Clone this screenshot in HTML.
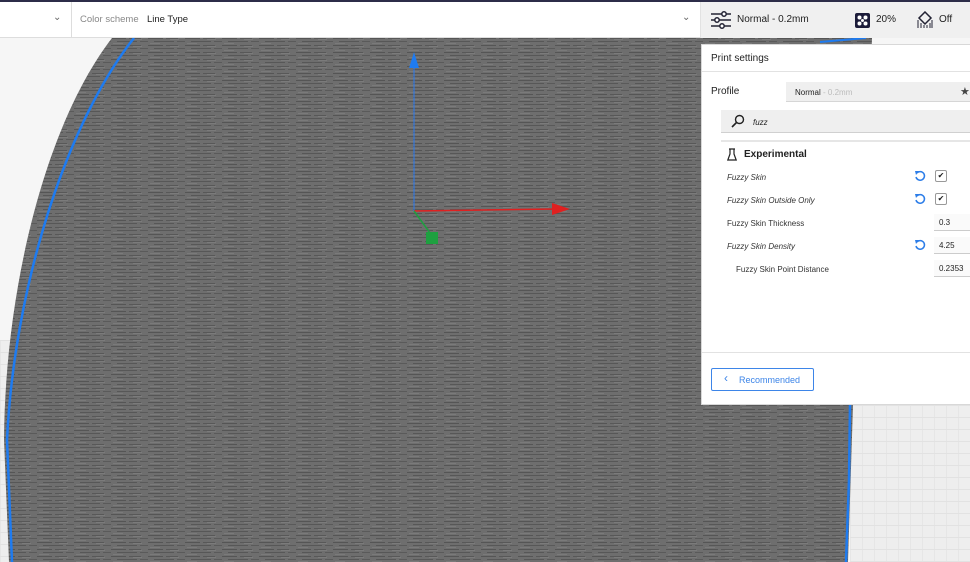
<!DOCTYPE html>
<html><head><meta charset="utf-8"><style>
*{margin:0;padding:0;box-sizing:border-box}
body{width:970px;height:562px;overflow:hidden;position:relative;background:#f6f6f6;font-family:"Liberation Sans",sans-serif;font-size:9px;color:#222}
.top{position:absolute;left:0;top:0;width:970px;height:38px;background:#fff;border-top:2px solid #2c2c48;border-bottom:1px solid #ddd}
.floor{position:absolute;background-color:#eeeeee;background-image:linear-gradient(#e2e2e2 1px,transparent 1px),linear-gradient(90deg,#e6e6e6 1px,transparent 1px);background-size:12px 12px}
.panel{position:absolute;left:701px;top:44px;width:269px;height:361px;background:#fff;border:1px solid #d8d8d8;border-right:none}
.t{position:absolute;white-space:nowrap}
.it{font-style:italic;font-size:8px;color:#333}
.lbl{font-size:8px;color:#333}
.cb{position:absolute;left:233px;width:12px;height:12px;border:1px solid #999;border-radius:2px;background:#fff;font-size:8px;line-height:10px;text-align:center}
.inp{position:absolute;left:232px;width:40px;height:17px;border-bottom:1px solid #ccc;background:#fafafa;font-size:8px;padding:4px 0 0 5px}
.rs{position:absolute;left:212px}
</style></head><body>
<div class="floor" style="left:0;top:340px;width:20px;height:222px"></div>
<div class="floor" style="left:850px;top:405px;width:120px;height:157px"></div>
<svg style="position:absolute;left:0;top:0" width="970" height="562">
<defs><pattern id="p" width="37" height="7" patternUnits="userSpaceOnUse">
<rect width="37" height="7" fill="#6e6e6e"/>
<rect y="3" width="15" height="1" fill="#555"/><rect x="18" y="3" width="12" height="1" fill="#585858"/>
<rect x="6" y="6" width="20" height="1" fill="#575757"/><rect x="29" y="6" width="8" height="1" fill="#5a5a5a"/>
<rect x="2" y="1" width="10" height="1" fill="#7a7a7a"/><rect x="22" y="4" width="9" height="1" fill="#7b7b7b"/>
</pattern></defs>
<path d="M112,38 C45,125 5,290 4,440 L9,562 L848,562 L853,405 C858,250 870,100 872,38 Z" fill="url(#p)"/>
<path d="M134,38 C65,125 14,290 7,440 L12,562" fill="none" stroke="#1e7bf0" stroke-width="2.5"/>
<path d="M850,405 L849,480 L846,562" fill="none" stroke="#1e7bf0" stroke-width="2.5"/>
<path d="M820,42 L866,38" stroke="#1e7bf0" stroke-width="2"/>
<line x1="414" y1="62" x2="414" y2="211" stroke="#2a7af0" stroke-width="1"/>
<polygon points="414,52 409,68 419,68" fill="#1e7bf0"/>
<line x1="414" y1="211" x2="555" y2="209" stroke="#e02020" stroke-width="1.5"/>
<polygon points="570,209 552,203 552,215" fill="#e02020"/>
<line x1="414" y1="211" x2="430" y2="233" stroke="#1ea040" stroke-width="1.5"/>
<rect x="426" y="232" width="12" height="12" fill="#1ea040"/>
</svg>
<div class="top">
 <div style="position:absolute;left:71px;top:0;width:1px;height:36px;background:#ddd"></div>
 <div class="t" style="left:53px;top:10px;color:#666;font-size:10px">&#8964;</div>
 <div class="t" style="left:80px;top:12px;color:#888;font-size:9.5px">Color scheme</div>
 <div class="t" style="left:147px;top:12px;font-size:9.5px">Line Type</div>
 <div class="t" style="left:682px;top:10px;color:#666;font-size:10px">&#8964;</div>
 <div style="position:absolute;left:700px;top:0;width:270px;height:36px;background:#f0f0f0;border-left:1px solid #e2e2e2"></div>
 <svg style="position:absolute;left:711px;top:9px" width="20" height="18"><g stroke="#223" stroke-width="1.5" fill="#fff"><line x1="0" y1="3" x2="20" y2="3"/><line x1="0" y1="9" x2="20" y2="9"/><line x1="0" y1="15" x2="20" y2="15"/><circle cx="13" cy="3" r="2.2"/><circle cx="6" cy="9" r="2.2"/><circle cx="11" cy="15" r="2.2"/></g></svg>
 <div class="t" style="left:737px;top:12px;font-size:10px">Normal - 0.2mm</div>
 <svg style="position:absolute;left:855px;top:11px" width="15" height="15"><rect width="15" height="15" rx="2" fill="#1c1c3a"/><g fill="#fff"><circle cx="4.5" cy="4.5" r="2"/><circle cx="10.5" cy="4.5" r="2"/><circle cx="4.5" cy="10.5" r="2"/><circle cx="10.5" cy="10.5" r="2"/><circle cx="7.5" cy="7.5" r="1.5"/></g></svg>
 <div class="t" style="left:876px;top:12px;font-size:10px">20%</div>
 <svg style="position:absolute;left:917px;top:9px" width="16" height="18"><path d="M8,1 L14,7 L8,13 L2,7 Z" fill="none" stroke="#223" stroke-width="1.5"/><path d="M1,9 L1,17 M4,12 L4,17 M7,14 L7,17 M10,14 L10,17 M13,12 L13,17 M15,9 L15,17" stroke="#223" stroke-width="1"/></svg>
 <div class="t" style="left:939px;top:12px;font-size:10px">Off</div>
</div>
<div class="panel">
 <div class="t" style="left:9px;top:8px;font-size:10px">Print settings</div>
 <div style="position:absolute;left:0;top:26px;width:269px;height:1px;background:#e2e2e2"></div>
 <div class="t" style="left:9px;top:41px;font-size:10px">Profile</div>
 <div style="position:absolute;left:84px;top:37px;width:185px;height:20px;background:#efefef;border-bottom:1px solid #d6d6d6"></div>
 <div class="t" style="left:93px;top:43px;font-size:8px">Normal <span style="color:#bbb">- 0.2mm</span></div>
 <div class="t" style="left:258px;top:40px;font-size:11px;color:#444">&#9733;</div>
 <div style="position:absolute;left:19px;top:65px;width:250px;height:23px;background:#efefef;border-bottom:1px solid #d0d0d0"></div>
 <svg style="position:absolute;left:29px;top:69px" width="14" height="14"><circle cx="8.5" cy="5.5" r="4" fill="none" stroke="#222" stroke-width="1.4"/><line x1="5.5" y1="8.5" x2="1" y2="13" stroke="#222" stroke-width="1.6"/></svg>
 <div class="t it" style="left:51px;top:73px;color:#222">fuzz</div>
 <div style="position:absolute;left:19px;top:95px;width:250px;height:2px;background:#e6e6e6"></div>
 <svg style="position:absolute;left:25px;top:103px" width="10" height="13"><path d="M2,1 L8,1 M3,1 L3,6 L0.8,12 L9.2,12 L7,6 L7,1" fill="none" stroke="#222" stroke-width="1.2"/></svg>
 <div class="t" style="left:42px;top:104px;font-size:10px;font-weight:bold">Experimental</div>
 <div class="t it" style="left:25px;top:128px">Fuzzy Skin</div>
 <div class="t it" style="left:25px;top:151px">Fuzzy Skin Outside Only</div>
 <div class="t lbl" style="left:25px;top:174px">Fuzzy Skin Thickness</div>
 <div class="t it" style="left:25px;top:197px">Fuzzy Skin Density</div>
 <div class="t lbl" style="left:34px;top:220px">Fuzzy Skin Point Distance</div>
 <svg class="rs" style="top:125px" width="12" height="12"><path d="M3,3 A4.3,4.3 0 1 1 2,7" fill="none" stroke="#2c7de8" stroke-width="1.5"/><polygon points="1,1 5,1 2,5" fill="#2c7de8"/></svg>
 <svg class="rs" style="top:148px" width="12" height="12"><path d="M3,3 A4.3,4.3 0 1 1 2,7" fill="none" stroke="#2c7de8" stroke-width="1.5"/><polygon points="1,1 5,1 2,5" fill="#2c7de8"/></svg>
 <svg class="rs" style="top:194px" width="12" height="12"><path d="M3,3 A4.3,4.3 0 1 1 2,7" fill="none" stroke="#2c7de8" stroke-width="1.5"/><polygon points="1,1 5,1 2,5" fill="#2c7de8"/></svg>
 <div class="cb" style="top:125px">&#10004;</div>
 <div class="cb" style="top:148px">&#10004;</div>
 <div class="inp" style="top:169px">0.3</div>
 <div class="inp" style="top:192px">4.25</div>
 <div class="inp" style="top:215px">0.2353</div>
 <div style="position:absolute;left:0;top:307px;width:269px;height:1px;background:#e2e2e2"></div>
 <div style="position:absolute;left:9px;top:323px;width:103px;height:23px;border:1px solid #3d85e8;border-radius:2px"></div>
 <div class="t" style="left:22px;top:326px;color:#3d85e8;font-size:12px">&#8249;</div>
 <div class="t" style="left:37px;top:330px;color:#3d85e8;font-size:9px">Recommended</div>
</div>
</body></html>
